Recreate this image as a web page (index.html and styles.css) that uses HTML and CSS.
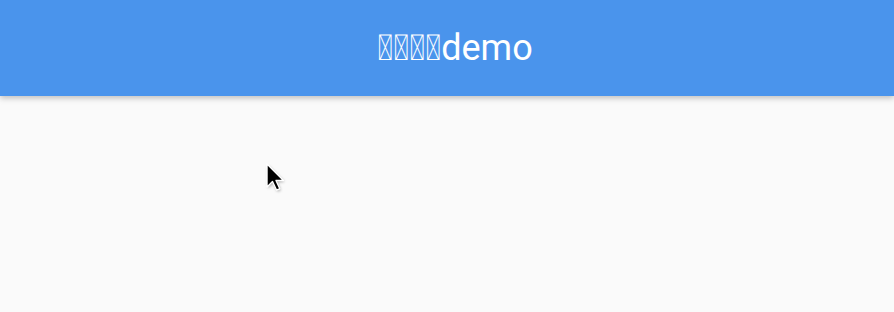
FILE: index.html
```html
<!DOCTYPE html>
<html>
<head><meta charset="utf-8"><link rel="stylesheet" href="styles.css"></head>
<body>
<header class="appbar"><h1 class="title">&#xE000;&#xE001;&#xE002;&#xE003;demo</h1></header>
<main class="content"></main>
<svg class="cursor" width="28" height="36" viewBox="0 0 28 36" aria-hidden="true">
  <defs><filter id="sh" x="-50%" y="-50%" width="200%" height="200%"><feGaussianBlur stdDeviation="1.5"/></filter></defs>
  <path d="M3 3 L3 26 L8.5 20.5 L12.5 29 L15.8 27.8 L12 19.5 L19.5 19.5 Z" fill="#000" opacity="0.35" filter="url(#sh)" transform="translate(1,1.5)"/>
  <path d="M3 3 L3 26 L8.5 20.5 L12.5 29 L15.8 27.8 L12 19.5 L19.5 19.5 Z" fill="#000" stroke="#fff" stroke-width="1.4" stroke-linejoin="round"/>
</svg>
</body>
</html>
```
FILE: styles.css
```css
html,body{margin:0;padding:0;}
body{width:894px;height:312px;background:#fafafa;overflow:hidden;font-family:Roboto,"Noto Sans",sans-serif;position:relative;}
.appbar{height:96px;background:#4a94ec;display:flex;align-items:center;justify-content:center;box-shadow:0 2px 6px rgba(0,0,0,.25);position:relative;z-index:1;}
.title{margin:0;padding-left:16px;color:#fff;font-weight:400;font-size:36px;line-height:1;}
.content{height:216px;}
.cursor{position:absolute;left:264px;top:161px;z-index:2;}
```
